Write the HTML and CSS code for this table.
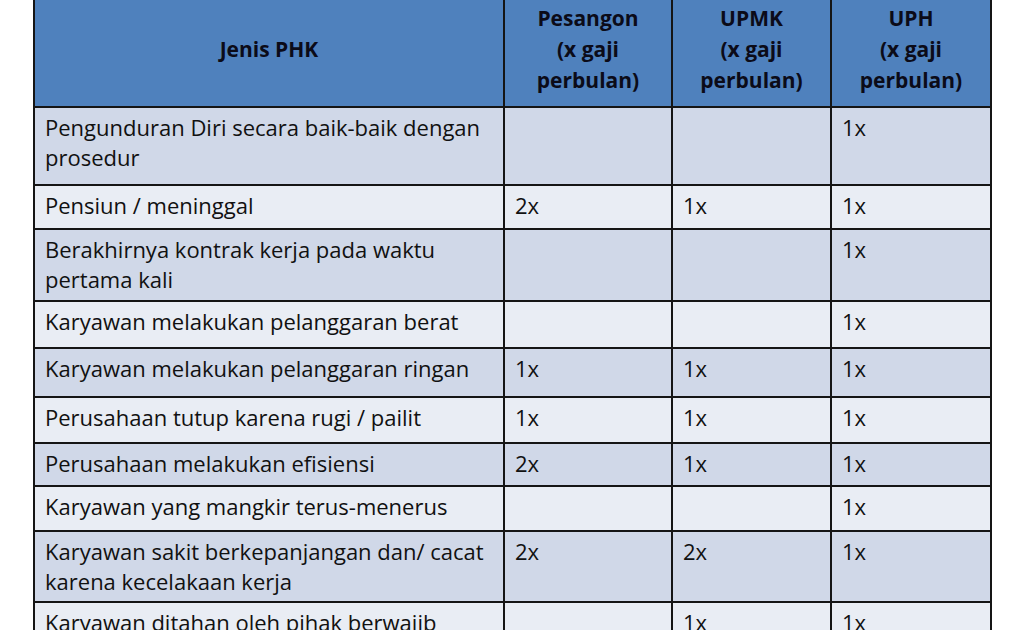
FILE: index.html
```html
<!DOCTYPE html>
<html>
<head>
<meta charset="utf-8">
<link rel="stylesheet" href="styles.css">
</head>
<body>
<div class="page">
<table class="phk">
  <colgroup>
    <col class="c1"><col class="c2"><col class="c3"><col class="c4">
  </colgroup>
  <thead>
    <tr>
      <th>Jenis PHK</th>
      <th>Pesangon<br>(x gaji<br>perbulan)</th>
      <th>UPMK<br>(x gaji<br>perbulan)</th>
      <th>UPH<br>(x gaji<br>perbulan)</th>
    </tr>
  </thead>
  <tbody>
    <tr class="odd r1"><td>Pengunduran Diri secara baik-baik dengan prosedur</td><td></td><td></td><td>1x</td></tr>
    <tr class="even r2"><td>Pensiun / meninggal</td><td>2x</td><td>1x</td><td>1x</td></tr>
    <tr class="odd r3"><td>Berakhirnya kontrak kerja pada waktu pertama kali</td><td></td><td></td><td>1x</td></tr>
    <tr class="even r4"><td>Karyawan melakukan pelanggaran berat</td><td></td><td></td><td>1x</td></tr>
    <tr class="odd r5"><td>Karyawan melakukan pelanggaran ringan</td><td>1x</td><td>1x</td><td>1x</td></tr>
    <tr class="even r6"><td>Perusahaan tutup karena rugi / pailit</td><td>1x</td><td>1x</td><td>1x</td></tr>
    <tr class="odd r7"><td>Perusahaan melakukan efisiensi</td><td>2x</td><td>1x</td><td>1x</td></tr>
    <tr class="even r8"><td>Karyawan yang mangkir terus-menerus</td><td></td><td></td><td>1x</td></tr>
    <tr class="odd r9"><td>Karyawan sakit berkepanjangan dan/ cacat karena kecelakaan kerja</td><td>2x</td><td>2x</td><td>1x</td></tr>
    <tr class="even r10"><td>Karyawan ditahan oleh pihak berwajib</td><td></td><td>1x</td><td>1x</td></tr>
  </tbody>
</table>
</div>
</body>
</html>
```
FILE: styles.css
```css
html, body {
  margin: 0;
  padding: 0;
  background: #ffffff;
  overflow: hidden;
}
.page {
  padding-left: 33px;
  width: 960px;
  height: 630px;
  overflow: hidden;
}
.phk {
  border-collapse: collapse;
  table-layout: fixed;
  width: 958px;
  margin-top: -4px;
  font-family: "Open Sans", Lato, sans-serif;
  font-size: 22px;
  color: #111111;
}
.c1 { width: 470px; }
.c2 { width: 168px; }
.c3 { width: 159px; }
.c4 { width: 160px; }
.phk th, .phk td {
  border: 2px solid #151515;
}
.phk th {
  background: #4f81bd;
  height: 102px;
  font-size: 21px;
  font-weight: bold;
  text-align: center;
  vertical-align: middle;
  line-height: 31px;
  padding: 0 4px 6px 4px;
  color: #0b0b18;
}
.phk td {
  vertical-align: top;
  text-align: left;
  line-height: 30px;
  padding: 4px 10px 0 10px;
}
.odd td { background: #d0d8e8; }
.even td { background: #e9edf4; }
.r1 td { height: 72px; }
.r2 td { height: 38px; }
.r3 td { height: 66px; }
.r4 td { height: 41px; }
.r5 td { height: 43px; }
.r6 td { height: 40px; }
.r7 td { height: 37px; }
.r8 td { height: 39px; }
.r9 td { height: 65px; }
.r10 td { height: 66px; }
```
